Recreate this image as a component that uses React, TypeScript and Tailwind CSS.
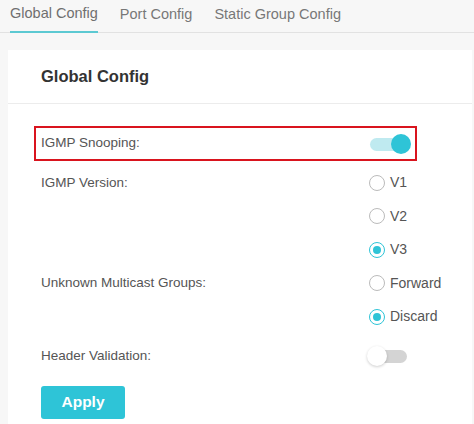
const tabs = ["Global Config", "Port Config", "Static Group Config"]

function Toggle({ on }: { on: boolean }) {
  return (
    <div className="relative h-[20px] w-[42px]">
      <div
        className={
          on
            ? "absolute left-[1px] right-[6px] top-[4px] h-[13px] rounded-full bg-[#bfeaf0]"
            : "absolute left-[8px] right-[4px] top-[4px] h-[13px] rounded-full bg-[#d4d4d4]"
        }
      />
      <div
        className={
          on
            ? "absolute right-0 top-0 h-[20px] w-[20px] rounded-full bg-[#2ec4d7]"
            : "absolute left-[-2px] top-0 h-[20px] w-[20px] rounded-full bg-white shadow-[0_1px_3px_rgba(0,0,0,0.2)]"
        }
      />
    </div>
  )
}

function Radio({ label, checked }: { label: string; checked?: boolean }) {
  return (
    <div className="flex h-[33.5px] items-center">
      <span
        className={
          checked
            ? "flex h-[16px] w-[16px] items-center justify-center rounded-full border border-[#2ec4d7]"
            : "h-[16px] w-[16px] rounded-full border border-[#bbb]"
        }
      >
        {checked && <span className="h-[8px] w-[8px] rounded-full bg-[#2ec4d7]" />}
      </span>
      <span className="ml-[5px] text-[14px] text-[#555]">{label}</span>
    </div>
  )
}

function Row({ label, children }: { label: string; children: React.ReactNode }) {
  return (
    <div className="flex pl-[7px]">
      <div className="flex h-[33.5px] w-[328px] items-center text-[13.5px] text-[#555]">{label}</div>
      <div className="flex flex-col">{children}</div>
    </div>
  )
}

export default function App() {
  return (
    <div
      className="h-[424px] w-[474px] overflow-hidden bg-[#f7f7f7]"
      style={{ fontFamily: '"Liberation Sans", Arial, sans-serif' }}
    >
      {/* TABS */}
      <div className="flex h-[33px] gap-[22px] border-b border-[#e2e2e2] pl-[10px]">
        {tabs.map((tab, i) => (
          <div
            key={tab}
            className={
              i === 0
                ? "-mb-px flex items-center border-b-2 border-[#5cc9d2] pb-[3px] text-[14.5px] text-[#6f6f6f]"
                : "flex items-center pb-[3px] text-[14.5px] text-[#777]"
            }
          >
            {tab}
          </div>
        ))}
      </div>

      {/* CARD */}
      <div className="ml-[8px] mr-[2px] mt-[17px] h-[400px] bg-white">
        <div className="flex h-[54px] items-center border-b border-[#ececec] pl-[33px]">
          <h2 className="text-[16.5px] font-bold text-[#333]">Global Config</h2>
        </div>

        <div className="pl-[26px] pt-[22px]">
          <div className="flex h-[35px] w-[383px] items-center border-2 border-[#d9141e] pl-[5px]">
            <div className="w-[328px] text-[13.5px] text-[#555]">IGMP Snooping:</div>
            <Toggle on />
          </div>

          <div className="mt-[5px]">
            <Row label="IGMP Version:">
              <Radio label="V1" />
              <Radio label="V2" />
              <Radio label="V3" checked />
            </Row>
            <Row label="Unknown Multicast Groups:">
              <Radio label="Forward" />
              <Radio label="Discard" checked />
            </Row>
          </div>

          <div className="mt-[6px] flex h-[33px] items-center pl-[7px]">
            <div className="w-[328px] text-[13.5px] text-[#555]">Header Validation:</div>
            <Toggle on={false} />
          </div>

          <button className="ml-[7px] mt-[13px] h-[33px] w-[84px] rounded-[3px] bg-[#2ec4d7] text-[15.5px] font-bold text-white">
            Apply
          </button>
        </div>
      </div>
    </div>
  )
}
